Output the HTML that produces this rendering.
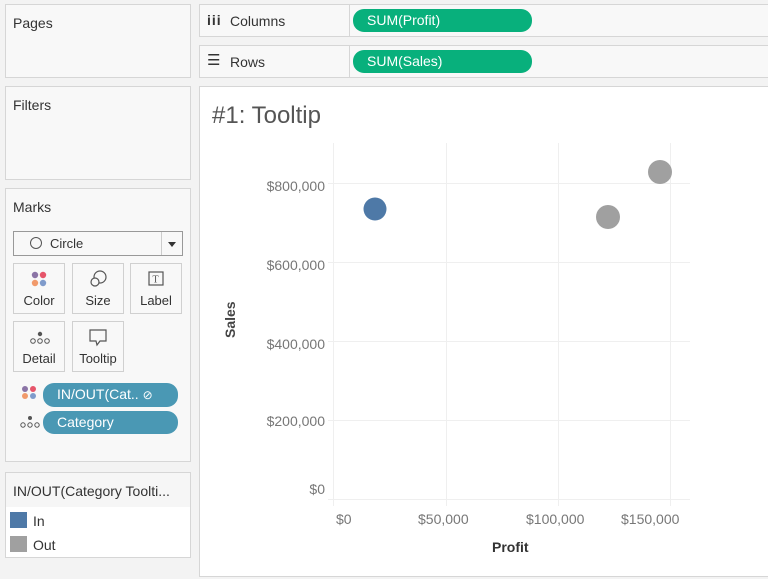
<!DOCTYPE html>
<html><head><style>
*{box-sizing:border-box;margin:0;padding:0}
body{width:768px;height:579px;background:#f3f3f3;font-family:"Liberation Sans",sans-serif;position:relative;overflow:hidden;color:#333}
.p{position:absolute;background:#f8f8f8;border:1px solid #d6d6d6}
.t{position:absolute;font-size:14px;color:#333}
.pill{position:absolute;border-radius:11px;color:#fff;font-size:14px;padding-left:14px;line-height:23px}
.btn{position:absolute;width:52px;height:51px;border:1px solid #d0d0d0;background:#f8f8f8;font-size:13px;text-align:center}
.btn span{position:absolute;bottom:5px;left:0;right:0}
.ax{position:absolute;font-size:14px;color:#777}
</style></head><body>
<div class="p" style="left:5px;top:4px;width:186px;height:74px"></div><div class="t" style="left:13px;top:15px">Pages</div>
<div class="p" style="left:5px;top:86px;width:186px;height:94px"></div><div class="t" style="left:13px;top:97px">Filters</div>
<div class="p" style="left:5px;top:188px;width:186px;height:274px"></div><div class="t" style="left:13px;top:199px">Marks</div>
<div style="position:absolute;left:13px;top:231px;width:170px;height:25px;border:1px solid #999;background:#f8f8f8;font-size:13px">
<span style="position:absolute;left:16px;top:5px;width:12px;height:12px;border:1.3px solid #555;border-radius:50%"></span>
<span style="position:absolute;left:36px;top:4px">Circle</span>
<span style="position:absolute;left:147px;top:0;height:23px;border-left:1px solid #ccc;width:22px"></span>
<span style="position:absolute;left:154px;top:10px;border:4px solid transparent;border-top:5px solid #333"></span></div>
<div class="btn" style="left:13px;top:263px"><svg style="position:absolute;left:16px;top:7px" width="20" height="20"><circle cx="5" cy="4" r="3.2" fill="#8b74a6"/><circle cx="13" cy="4" r="3.2" fill="#e6556a"/><circle cx="5" cy="12" r="3.2" fill="#f19a6b"/><circle cx="13" cy="12" r="3.2" fill="#7f9bcb"/></svg><span>Color</span></div>
<div class="btn" style="left:72px;top:263px"><svg style="position:absolute;left:16px;top:5px" width="20" height="20"><circle cx="11" cy="8" r="6" fill="none" stroke="#555" stroke-width="1.2"/><circle cx="6" cy="13" r="4" fill="#f8f8f8" stroke="#555" stroke-width="1.2"/></svg><span>Size</span></div>
<div class="btn" style="left:130px;top:263px"><svg style="position:absolute;left:17px;top:7px" width="18" height="18"><rect x="1" y="1" width="14" height="13" fill="none" stroke="#555" stroke-width="1.2"/><text x="4.5" y="11.5" font-size="10" font-family="Liberation Serif" fill="#555">T</text></svg><span>Label</span></div>
<div class="btn" style="left:13px;top:321px"><svg style="position:absolute;left:14px;top:9px" width="24" height="16"><circle cx="12" cy="3" r="2.2" fill="#555"/><circle cx="5" cy="10" r="2.3" fill="none" stroke="#555"/><circle cx="12" cy="10" r="2.3" fill="none" stroke="#555"/><circle cx="19" cy="10" r="2.3" fill="none" stroke="#555"/></svg><span>Detail</span></div>
<div class="btn" style="left:72px;top:321px"><svg style="position:absolute;left:15px;top:6px" width="22" height="20"><path d="M2 2H18V13H12L9 17L8 13H2Z" fill="none" stroke="#555" stroke-width="1.2"/></svg><span>Tooltip</span></div>
<svg style="position:absolute;left:21px;top:385px" width="18" height="18"><circle cx="4" cy="4" r="3" fill="#8b74a6"/><circle cx="12" cy="4" r="3" fill="#e6556a"/><circle cx="4" cy="11" r="3" fill="#f19a6b"/><circle cx="12" cy="11" r="3" fill="#7f9bcb"/></svg>
<div class="pill" style="left:43px;top:383px;width:135px;background:#4a98b4">IN/OUT(Cat.. <span style="font-size:12px">⊘</span></div>
<svg style="position:absolute;left:19px;top:415px" width="22" height="16"><circle cx="11" cy="3" r="2" fill="#555"/><circle cx="4" cy="10" r="2.2" fill="none" stroke="#555"/><circle cx="11" cy="10" r="2.2" fill="none" stroke="#555"/><circle cx="18" cy="10" r="2.2" fill="none" stroke="#555"/></svg>
<div class="pill" style="left:43px;top:411px;width:135px;background:#4a98b4">Category</div>
<div class="p" style="left:5px;top:472px;width:186px;height:86px;background:#fff"></div>
<div style="position:absolute;left:6px;top:473px;width:184px;height:34px;background:#f6f6f6"></div>
<div class="t" style="left:13px;top:483px">IN/OUT(Category Toolti...</div>
<div style="position:absolute;left:10px;top:512px;width:17px;height:16px;background:#4e79a7"></div><div class="t" style="left:33px;top:513px">In</div>
<div style="position:absolute;left:10px;top:536px;width:17px;height:16px;background:#a0a0a0"></div><div class="t" style="left:33px;top:537px">Out</div>

<div class="p" style="left:199px;top:4px;width:580px;height:33px"></div>
<div style="position:absolute;left:349px;top:5px;width:1px;height:31px;background:#d6d6d6"></div>
<div class="t" style="left:207px;top:12px;font-weight:bold;letter-spacing:1px">iii</div><div class="t" style="left:230px;top:13px">Columns</div>
<div class="pill" style="left:353px;top:9px;width:179px;background:#08b07c">SUM(Profit)</div>
<div class="p" style="left:199px;top:45px;width:580px;height:33px"></div>
<div style="position:absolute;left:349px;top:46px;width:1px;height:31px;background:#d6d6d6"></div>
<div class="t" style="left:207px;top:51px;font-size:15px">☰</div><div class="t" style="left:230px;top:54px">Rows</div>
<div class="pill" style="left:353px;top:50px;width:179px;background:#08b07c">SUM(Sales)</div>

<div style="position:absolute;left:199px;top:86px;width:580px;height:491px;background:#fff;border:1px solid #d6d6d6"></div>
<div style="position:absolute;left:212px;top:102px;font-size:24px;color:#555">#1: Tooltip</div>
<svg style="position:absolute;left:0;top:0" width="768" height="579">
<g stroke="#efefef" stroke-width="1">
<line x1="328" y1="499.5" x2="690" y2="499.5"/><line x1="328" y1="420.5" x2="690" y2="420.5"/><line x1="328" y1="341.5" x2="690" y2="341.5"/><line x1="328" y1="262.5" x2="690" y2="262.5"/><line x1="328" y1="183.5" x2="690" y2="183.5"/>
<line x1="333.5" y1="143" x2="333.5" y2="506"/><line x1="446.5" y1="143" x2="446.5" y2="506"/><line x1="558.5" y1="143" x2="558.5" y2="506"/><line x1="670.5" y1="143" x2="670.5" y2="506"/>
</g>
<circle cx="375" cy="209" r="11.5" fill="#4e79a7"/>
<circle cx="608" cy="217" r="12" fill="#a0a0a0"/>
<circle cx="660" cy="172" r="12" fill="#a0a0a0"/>
</svg>
<div class="ax" style="right:443px;top:178px">$800,000</div>
<div class="ax" style="right:443px;top:257px">$600,000</div>
<div class="ax" style="right:443px;top:336px">$400,000</div>
<div class="ax" style="right:443px;top:413px">$200,000</div>
<div class="ax" style="right:443px;top:481px">$0</div>
<div class="ax" style="left:336px;top:511px">$0</div>
<div class="ax" style="left:418px;top:511px">$50,000</div>
<div class="ax" style="left:526px;top:511px">$100,000</div>
<div class="ax" style="left:621px;top:511px">$150,000</div>
<div style="position:absolute;left:492px;top:539px;font-size:14px;font-weight:bold;color:#333">Profit</div>
<div style="position:absolute;left:222px;top:338px;font-size:14px;font-weight:bold;color:#444;transform:rotate(-90deg);transform-origin:left top">Sales</div>
</body></html>
